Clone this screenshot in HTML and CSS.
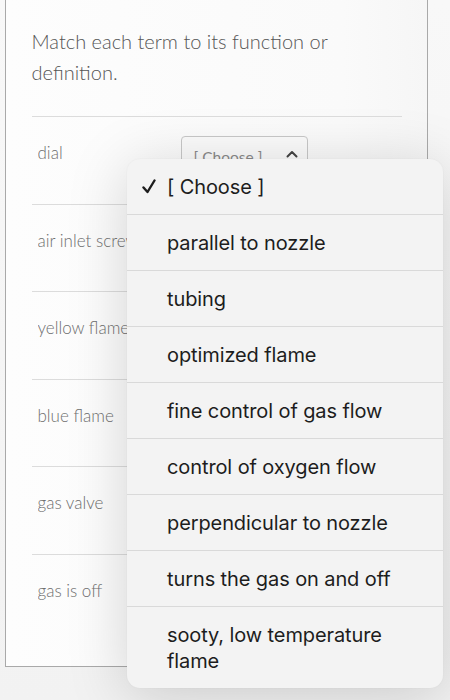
FILE: index.html
```html
<!DOCTYPE html>
<html lang="en">
<head>
<meta charset="utf-8">
<title>Match terms</title>
<link rel="stylesheet" href="styles.css">
</head>
<body>
<div class="page">
  <div class="card">
    <p class="prompt">Match each term to its function or definition.</p>
    <div class="rows">
      <div class="row"><span class="term">dial</span><div class="select"><span>[ Choose ]</span><svg class="chev" width="12" height="8" viewBox="0 0 12 8"><polyline points="1.5,6.5 6,2 10.5,6.5" fill="none" stroke="#444" stroke-width="2" stroke-linecap="round" stroke-linejoin="round"/></svg></div></div>
      <div class="row"><span class="term">air inlet screw</span><div class="select covered"><span>[ Choose ]</span></div></div>
      <div class="row"><span class="term">yellow flame</span><div class="select covered"><span>[ Choose ]</span></div></div>
      <div class="row"><span class="term">blue flame</span><div class="select covered"><span>[ Choose ]</span></div></div>
      <div class="row"><span class="term">gas valve</span><div class="select covered"><span>[ Choose ]</span></div></div>
      <div class="row last"><span class="term">gas is off</span><div class="select covered"><span>[ Choose ]</span></div></div>
    </div>
  </div>

  <ul class="menu">
    <li class="item selected"><span class="check"><svg width="14" height="15" viewBox="0 0 14 15"><polyline points="1.5,8.5 5.5,13 12.5,1.5" fill="none" stroke="#1d1d1d" stroke-width="2.4" stroke-linecap="round" stroke-linejoin="round"/></svg></span><span>[ Choose ]</span></li>
    <li class="item"><span class="check"></span><span>parallel to nozzle</span></li>
    <li class="item"><span class="check"></span><span>tubing</span></li>
    <li class="item"><span class="check"></span><span>optimized flame</span></li>
    <li class="item"><span class="check"></span><span>fine control of gas flow</span></li>
    <li class="item"><span class="check"></span><span>control of oxygen flow</span></li>
    <li class="item"><span class="check"></span><span>perpendicular to nozzle</span></li>
    <li class="item"><span class="check"></span><span>turns the gas on and off</span></li>
    <li class="item"><span class="check"></span><span>sooty, low temperature flame</span></li>
  </ul>
</div>
</body>
</html>
```

FILE: styles.css
```css
html, body {
  margin: 0;
  padding: 0;
}

body {
  width: 450px;
  height: 700px;
  overflow: hidden;
  background: #f2f2f2;
}

.page {
  position: relative;
  height: 700px;
  background: linear-gradient(to bottom, #f8f8f8 0%, #f2f2f2 100%);
}

.card {
  margin-left: 5px;
  width: 423px;
  box-sizing: border-box;
  border: 1.5px solid #a9a9a9;
  border-top: none;
  background: linear-gradient(to right, #fdfdfd 0%, #fafafa 80%, #f6f6f6 100%);
  padding: 26px 25px 0 25.5px;
  height: 667px;
  font-family: Lato, "Open Sans", sans-serif;
}

.prompt {
  margin: 0;
  font-size: 20px;
  font-weight: 300;
  line-height: 31px;
  color: #555;
}

.rows {
  margin-top: 28px;
}

.row {
  border-top: 1.5px solid #dcdcdc;
  display: flex;
  align-items: flex-start;
  height: 87.5px;
  box-sizing: border-box;
}

.term {
  width: 89px;
  margin-left: 6px;
  margin-right: 54px;
  padding-top: 25px;
  font-size: 17px;
  font-weight: 300;
  line-height: 22px;
  color: #6f6f6f;
  white-space: nowrap;
  overflow: hidden;
}

.select {
  margin-top: 19px;
  width: 127px;
  height: 42px;
  box-sizing: border-box;
  border: 1px solid #c8c8c8;
  border-radius: 4px;
  background: #fbfbfb;
  display: flex;
  align-items: center;
  justify-content: space-between;
  padding: 0 9px 0 12px;
  font-size: 15.5px;
  color: #8a8a8a;
}

.select.covered {
  visibility: hidden;
}

.chev {
  margin-top: -6px;
}

.menu {
  position: absolute;
  left: 127px;
  top: 159px;
  width: 316px;
  margin: 0;
  padding: 0;
  list-style: none;
  background: #f3f3f3;
  border-radius: 13px;
  box-shadow: 0 8px 60px rgba(0, 0, 0, 0.17), 0 0 2px rgba(0, 0, 0, 0.05);
  overflow: hidden;
  font-family: Inter, "Noto Sans", sans-serif;
}

.item {
  display: flex;
  align-items: flex-start;
  padding: 14.5px 20px 14.5px 15px;
  font-size: 20px;
  line-height: 26px;
  color: #1d1d1d;
  border-top: 1px solid #d9d9d9;
  letter-spacing: -0.1px;
}

.item:first-child {
  border-top: none;
}

.check {
  width: 25px;
  flex: none;
  display: flex;
  align-items: center;
  height: 26px;
}
```
